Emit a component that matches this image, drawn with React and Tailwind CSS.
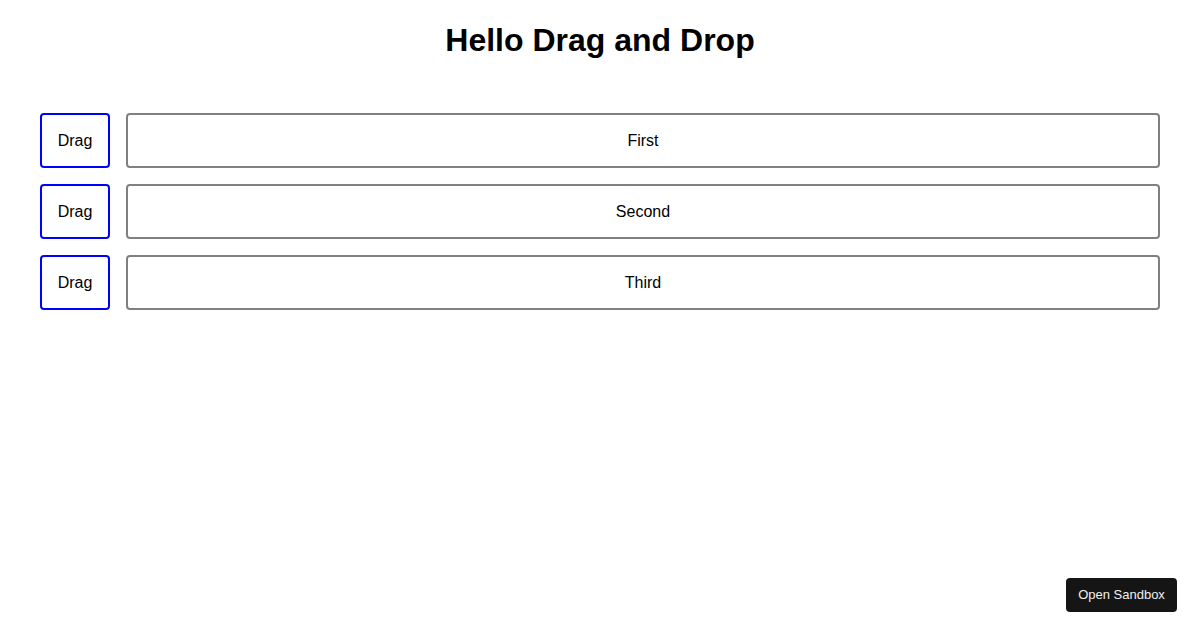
const items = ["First", "Second", "Third"];

export default function App() {
  return (
    <div className="relative min-h-[630px] bg-white text-black font-['Liberation_Sans',Arial,sans-serif]">
      <h1 className="pt-[22px] text-center text-[32px] font-bold leading-[37px]">
        Hello Drag and Drop
      </h1>

      <ul className="mt-[54px] flex flex-col gap-[16px] px-[40px]">
        {items.map((item) => (
          <li key={item} className="flex h-[55px] gap-[16px]">
            <div className="flex w-[70px] items-center justify-center rounded border-2 border-[#0000ff] text-base">
              Drag
            </div>
            <div className="flex flex-1 items-center justify-center rounded border-2 border-[#808080] text-base">
              {item}
            </div>
          </li>
        ))}
      </ul>

      <button
        type="button"
        className="absolute right-[23px] bottom-[18px] h-[34px] w-[111px] rounded bg-[#151515] text-[13px] text-[#f0f0f0]"
      >
        Open Sandbox
      </button>
    </div>
  );
}
